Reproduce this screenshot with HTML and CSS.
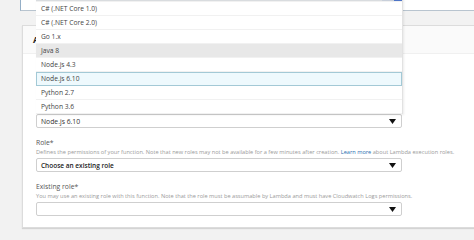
FILE: index.html
```html
<!DOCTYPE html>
<html lang="en">
<head>
    <meta charset="UTF-8">
    <title>Create function</title>
    <link rel="stylesheet" href="styles.css">
</head>
<body>
    <!-- tile above, mostly scrolled off -->
    <div class="prev-card"></div>

    <div class="card">
        <div class="card-head">
            <h3>Author from scratch</h3>
        </div>
        <div class="card-body">
            <div class="field">
                <div class="label">Name*</div>
                <div class="select"><span>myFunctionName</span></div>
            </div>
            <div class="field">
                <div class="label">Runtime*</div>
                <div class="select">
                    <span>Node.js 6.10</span>
                    <svg class="arrow" width="7" height="5" viewBox="0 0 7 5"><path d="M0 0h7L3.5 5z" fill="#111"/></svg>
                </div>
            </div>
            <!-- 角色 -->
            <div class="field">
                <div class="label">Role*</div>
                <div class="desc">Defines the permissions of your function. Note that new roles may not be available for a few minutes after creation. <a href="#">Learn more</a> about Lambda execution roles.</div>
                <div class="select">
                    <span class="strong">Choose an existing role</span>
                    <svg class="arrow" width="7" height="5" viewBox="0 0 7 5"><path d="M0 0h7L3.5 5z" fill="#111"/></svg>
                </div>
            </div>
            <div class="field">
                <div class="label">Existing role*</div>
                <div class="desc">You may use an existing role with this function. Note that the role must be assumable by Lambda and must have Cloudwatch Logs permissions.</div>
                <div class="select">
                    <span></span>
                    <svg class="arrow" width="7" height="5" viewBox="0 0 7 5"><path d="M0 0h7L3.5 5z" fill="#111"/></svg>
                </div>
            </div>
        </div>
    </div>

    <!-- runtime dropdown list (open) -->
    <ul class="dropdown">
        <li class="cut"><span class="thumb"></span></li>
        <li>C# (.NET Core 1.0)</li>
        <li>C# (.NET Core 2.0)</li>
        <li>Go 1.x</li>
        <li class="hover">Java 8</li>
        <li>Node.js 4.3</li>
        <li class="selected">Node.js 6.10</li>
        <li>Python 2.7</li>
        <li>Python 3.6</li>
    </ul>
</body>
</html>
```

FILE: styles.css
```css
body{
 margin: 0;
 background-color: #f2f2f2;
 font-family: "Open Sans", "Noto Sans", sans-serif;
 overflow: hidden;
 position: relative;
 height: 240px;
}
.prev-card{
 margin-left: 20px;
 height: 10px;
 background-color: #fff;
 border-left: 1px solid #94aec6;
 border-bottom: 1px solid #b8c4cf;
}
.card{
 margin-top: 14px;
 margin-left: 22px;
 margin-right: -20px;
 background-color: #fff;
 border: 1px solid #dcdcdc;
 box-shadow: 0 1px 1px rgba(0,0,0,0.12);
}
.card-head{
 height: 27px;
 background-color: #fafafa;
 border-bottom: 1px solid #f0f0f0;
 padding-left: 10px;
 display: flex;
 align-items: center;
}
h3{
 margin: 0;
 font-size: 9px;
 font-weight: 700;
 color: #222;
}
.card-body{
 padding: 12px 13px 11px;
 width: 366px;
}
.field{
 margin-top: 10px;
}
.field:first-child{
 margin-top: 0;
}
.label{
 font-size: 6.8px;
 line-height: 10px;
 color: #555;
}
.desc{
 font-size: 5.65px;
 line-height: 8px;
 color: #9a9a9a;
 white-space: nowrap;
}
.desc a{
 color: #2a6fb0;
 text-decoration: none;
}
.select{
 margin-top: 2px;
 height: 14px;
 box-sizing: border-box;
 border: 1px solid #cfcfcf;
 border-radius: 2px;
 background-color: #fff;
 display: flex;
 align-items: center;
 justify-content: space-between;
 padding: 0 5px 0 4px;
 font-size: 6.8px;
 color: #333;
}
.strong{
 font-size: 6.5px;
 font-weight: 600;
 color: #222;
}
.arrow{
 display: block;
}
.dropdown{
 position: absolute;
 left: 36px;
 top: -12px;
 width: 366px;
 margin: 0;
 padding: 0;
 list-style: none;
 background-color: #fff;
 border-right: 1px solid #e2e2e2;
 box-shadow: 1px 1px 2px rgba(0,0,0,0.08);
}
.dropdown li{
 height: 14px;
 box-sizing: border-box;
 border-bottom: 1px solid #f1f1f1;
 padding-left: 5px;
 font-size: 6.7px;
 line-height: 13px;
 color: #444;
}
.dropdown .cut{
 background-color: #d9dcdf;
 position: relative;
}
.thumb{
 position: absolute;
 right: 0;
 top: 0;
 bottom: 0;
 width: 20px;
 background: linear-gradient(to right, #c8cfda 0, #c8cfda 12px, #4d74c7 12px);
}
.dropdown .hover{
 background-color: #e8e8e8;
}
.dropdown .selected{
 background-color: #eef9fd;
 border: 1px solid #a3c9d6;
 padding-left: 4px;
 line-height: 12px;
}
```
